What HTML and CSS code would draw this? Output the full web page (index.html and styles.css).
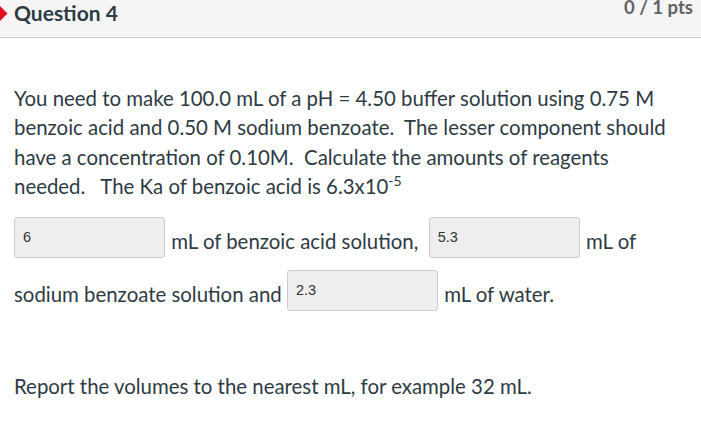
FILE: index.html
```html
<!DOCTYPE html>
<html>
<head>
<meta charset="utf-8">
<link rel="stylesheet" href="styles.css">
</head>
<body>
<div class="question">
  <div class="header">
    <span class="flag"></span>
    <span class="title">Question 4</span>
    <span class="pts">0 / 1 pts</span>
  </div>
  <div class="content">
    <p class="intro">You need to make 100.0 mL of a pH = 4.50 buffer solution using 0.75 M benzoic acid and 0.50 M sodium benzoate.&nbsp; The lesser component should have a concentration of 0.10M.&nbsp; Calculate the amounts of reagents needed.&nbsp;&nbsp; The Ka of benzoic acid is 6.3x10<sup>-5</sup></p>
    <p class="answers"><input class="ans" type="text" value="6"> mL of benzoic acid solution,&nbsp; <input class="ans" type="text" value="5.3"> mL of sodium benzoate solution and <input class="ans" type="text" value="2.3"> mL of water.</p>
    <p class="note">Report the volumes to the nearest mL, for example 32 mL.</p>
  </div>
</div>
</body>
</html>
```
FILE: styles.css
```css
html, body {
  margin: 0;
  padding: 0;
  background: #ffffff;
}
body {
  font-family: Lato, "Noto Sans", sans-serif;
  color: #2d3b45;
  overflow: hidden;
}
.question {
  width: 701px;
}
.header {
  position: relative;
  height: 37px;
  background: #f5f5f5;
  border-bottom: 1px solid #c7cdd1;
  display: flex;
  justify-content: space-between;
  align-items: flex-start;
  padding: 0 8px 0 14px;
  overflow: hidden;
}
.flag {
  position: absolute;
  left: -13px;
  top: 5px;
  width: 17px;
  height: 17px;
  background: #e0101e;
  transform: rotate(45deg);
}
.title {
  font-weight: 700;
  font-size: 21px;
  line-height: 24px;
  margin-top: 1px;
}
.pts {
  font-weight: 700;
  font-size: 18.5px;
  line-height: 20px;
  color: #5f6366;
  margin-top: -3px;
}
.content {
  padding: 0 14px;
  font-size: 20.4px;
  line-height: 29.4px;
}
.intro {
  margin: 46px 0 0 0;
}
.intro sup {
  font-size: 14px;
  line-height: 0;
}
.answers {
  margin: 15px 0 0 0;
}
.ans {
  box-sizing: border-box;
  width: 151px;
  height: 41px;
  margin: 0 1px 12px 0;
  padding: 0 8px;
  vertical-align: middle;
  background: #eeeeee;
  border: 1px solid #cccccc;
  border-radius: 3px;
  font-family: "Liberation Sans", Arial, sans-serif;
  font-size: 14.5px;
  color: #333333;
}
.note {
  margin: 49px 0 0 0;
}
```
